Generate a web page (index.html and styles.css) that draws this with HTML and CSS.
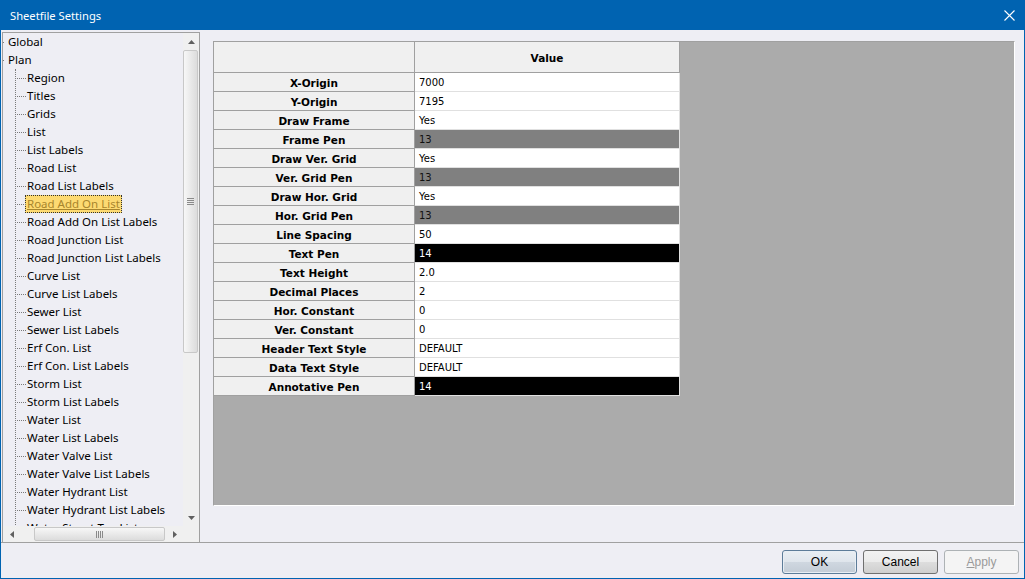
FILE: index.html
```html
<!DOCTYPE html>
<html>
<head>
<meta charset="utf-8">
<link rel="stylesheet" href="styles.css">
</head>
<body>
<div class="window">
  <div class="titlebar">
    <span class="title">Sheetfile Settings</span>
    <svg class="close" width="11" height="11" viewBox="0 0 11 11"><path d="M0.5 0.5 L10.5 10.5 M10.5 0.5 L0.5 10.5" stroke="#fff" stroke-width="1.1" fill="none"/></svg>
  </div>
  <div class="body">
    <div class="tree">
      <div class="tree-view">
        <div class="tree-items">
          <div class="row top"><span class="lbl">Global</span></div>
          <div class="row top"><span class="lbl">Plan</span></div>
          <div class="children">
            <div class="row child"><span class="lbl">Region</span></div>
            <div class="row child"><span class="lbl">Titles</span></div>
            <div class="row child"><span class="lbl">Grids</span></div>
            <div class="row child"><span class="lbl">List</span></div>
            <div class="row child"><span class="lbl">List Labels</span></div>
            <div class="row child"><span class="lbl">Road List</span></div>
            <div class="row child"><span class="lbl">Road List Labels</span></div>
            <div class="row child"><span class="lbl sel">Road Add On List</span></div>
            <div class="row child"><span class="lbl">Road Add On List Labels</span></div>
            <div class="row child"><span class="lbl">Road Junction List</span></div>
            <div class="row child"><span class="lbl">Road Junction List Labels</span></div>
            <div class="row child"><span class="lbl">Curve List</span></div>
            <div class="row child"><span class="lbl">Curve List Labels</span></div>
            <div class="row child"><span class="lbl">Sewer List</span></div>
            <div class="row child"><span class="lbl">Sewer List Labels</span></div>
            <div class="row child"><span class="lbl">Erf Con. List</span></div>
            <div class="row child"><span class="lbl">Erf Con. List Labels</span></div>
            <div class="row child"><span class="lbl">Storm List</span></div>
            <div class="row child"><span class="lbl">Storm List Labels</span></div>
            <div class="row child"><span class="lbl">Water List</span></div>
            <div class="row child"><span class="lbl">Water List Labels</span></div>
            <div class="row child"><span class="lbl">Water Valve List</span></div>
            <div class="row child"><span class="lbl">Water Valve List Labels</span></div>
            <div class="row child"><span class="lbl">Water Hydrant List</span></div>
            <div class="row child"><span class="lbl">Water Hydrant List Labels</span></div>
            <div class="row child"><span class="lbl">Water Street Tap List</span></div>
            <div class="row child"><span class="lbl">Water Street Tap List Labels</span></div>
          </div>
        </div>
        <div class="vscroll">
          <div class="sb-btn"><svg width="7" height="4" viewBox="0 0 7 4"><path d="M3.5 0 L7 4 L0 4 Z" fill="#606060"/></svg></div>
          <div class="thumb-v">
            <svg width="7" height="7" viewBox="0 0 7 7"><path d="M0 0.5H7M0 2.5H7M0 4.5H7M0 6.5H7" stroke="#8a8a8a" stroke-width="1"/></svg>
          </div>
          <div class="track"></div>
          <div class="sb-btn"><svg width="7" height="4" viewBox="0 0 7 4"><path d="M0 0 L7 0 L3.5 4 Z" fill="#606060"/></svg></div>
        </div>
      </div>
      <div class="hscroll-row">
        <div class="hscroll">
          <div class="sb-btn-h"><svg width="4" height="7" viewBox="0 0 4 7"><path d="M4 0 L4 7 L0 3.5 Z" fill="#606060"/></svg></div>
          <div class="thumb-h">
            <svg width="7" height="7" viewBox="0 0 7 7"><path d="M0.5 0V7M2.5 0V7M4.5 0V7M6.5 0V7" stroke="#8a8a8a" stroke-width="1"/></svg>
          </div>
          <div class="track"></div>
          <div class="sb-btn-h"><svg width="4" height="7" viewBox="0 0 4 7"><path d="M0 0 L4 3.5 L0 7 Z" fill="#606060"/></svg></div>
        </div>
        <div class="corner"></div>
      </div>
    </div>
    <div class="main">
      <div class="gridframe">
        <div class="grid">
          <div class="hc"></div><div class="hc">Value</div>
          <div class="rh">X-Origin</div><div class="v">7000</div>
          <div class="rh">Y-Origin</div><div class="v">7195</div>
          <div class="rh">Draw Frame</div><div class="v">Yes</div>
          <div class="rh">Frame Pen</div><div class="v gray">13</div>
          <div class="rh">Draw Ver. Grid</div><div class="v">Yes</div>
          <div class="rh">Ver. Grid Pen</div><div class="v gray">13</div>
          <div class="rh">Draw Hor. Grid</div><div class="v">Yes</div>
          <div class="rh">Hor. Grid Pen</div><div class="v gray">13</div>
          <div class="rh">Line Spacing</div><div class="v">50</div>
          <div class="rh">Text Pen</div><div class="v black">14</div>
          <div class="rh">Text Height</div><div class="v">2.0</div>
          <div class="rh">Decimal Places</div><div class="v">2</div>
          <div class="rh">Hor. Constant</div><div class="v">0</div>
          <div class="rh">Ver. Constant</div><div class="v">0</div>
          <div class="rh">Header Text Style</div><div class="v">DEFAULT</div>
          <div class="rh">Data Text Style</div><div class="v">DEFAULT</div>
          <div class="rh">Annotative Pen</div><div class="v black">14</div>
        </div>
      </div>
    </div>
  </div>
  <div class="footer">
    <button class="btn default">OK</button>
    <button class="btn">Cancel</button>
    <button class="btn disabled"><u>A</u>pply</button>
  </div>
</div>
</body>
</html>
```

FILE: styles.css
```css
* { box-sizing: border-box; }
html, body { margin: 0; padding: 0; }
body {
  width: 1025px;
  height: 579px;
  overflow: hidden;
  font-family: "Liberation Sans", Arial, sans-serif;
  background: #eeeef4;
}
.window {
  width: 1025px;
  height: 579px;
  display: flex;
  flex-direction: column;
  background: #eeeef4;
  border: 1px solid #0063b1;
  border-top: 0;
}
.titlebar {
  height: 30px;
  flex: none;
  margin: 0 -1px;
  background: #0063b1;
  color: #fff;
  display: flex;
  align-items: center;
  justify-content: space-between;
  padding: 0 10px 0 10px;
}
.title {
  font-family: "Noto Sans", "Open Sans", sans-serif;
  font-size: 11.2px;
  padding-top: 1px;
}
.close { display: block; margin-right: 0; }

.body {
  display: flex;
  height: 512px;
  flex: none;
}
.tree {
  width: 198px;
  flex: none;
  margin: 2px 0 0 1px;
  border: 1px solid #a0a0a0;
  border-bottom: 0;
  display: flex;
  flex-direction: column;
  background: #eeeef4;
}
.tree-view {
  display: flex;
  height: 493px;
}
.tree-items {
  width: 180px;
  overflow: hidden;
  font-family: "Noto Sans", "Open Sans", sans-serif;
  font-size: 11.5px;
  color: #000;
}
.row {
  height: 18px;
  display: flex;
  align-items: center;
  white-space: nowrap;
  position: relative;
}
.lbl {
  display: inline-block;
  height: 18px;
  line-height: 16px;
  padding: 0 1px;
  border: 1px dotted transparent;
}
.row.top { padding-left: 3px; }
.row.top::before {
  content: "";
  position: absolute;
  left: 0;
  top: 9px;
  width: 1px;
  height: 1px;
  background: #7a7a7a;
}
.children {
  margin-left: 12px;
  border-left: 1px dotted #7a7a7a;
}
.row.child { padding-left: 9px; }
.row.child::before {
  content: "";
  position: absolute;
  left: 1px;
  top: 9px;
  width: 9px;
  border-top: 1px dotted #7a7a7a;
}
.lbl.sel {
  background: #fdda72;
  border-color: #303030;
  color: #a8852c;
  text-decoration: underline;
}

.vscroll {
  width: 16px;
  flex: none;
  background: #f0f0f0;
  display: flex;
  flex-direction: column;
}
.sb-btn {
  height: 17px;
  flex: none;
  display: flex;
  align-items: center;
  justify-content: center;
}
.thumb-v {
  height: 303px;
  flex: none;
  margin-right: 1px;
  border: 1px solid #c8c8c8;
  border-radius: 2px;
  background: linear-gradient(to right, #f7f7f7, #dcdcdc);
  display: flex;
  align-items: center;
  justify-content: center;
}
.thumb-v svg, .thumb-h svg { display: block; }
.track { flex: 1; }

.hscroll-row {
  display: flex;
  height: 16px;
  flex: none;
}
.hscroll {
  width: 180px;
  flex: none;
  background: #f0f0f0;
  display: flex;
}
.sb-btn-h {
  width: 17px;
  flex: none;
  display: flex;
  align-items: center;
  justify-content: center;
}
.thumb-h {
  margin-left: 14px;
  width: 131px;
  flex: none;
  margin-top: 1px;
  margin-bottom: 1px;
  border: 1px solid #c8c8c8;
  border-radius: 2px;
  background: linear-gradient(to bottom, #f7f7f7, #dcdcdc);
  display: flex;
  align-items: center;
  justify-content: center;
}
.corner { flex: 1; background: #f0f0f0; }

.main {
  flex: 1;
  padding: 11px 9px 36px 13px;
}
.gridframe {
  height: 100%;
  border: 1px solid;
  border-color: #a0a0a0 #ffffff #ffffff #a0a0a0;
  background: #ababab;
}
.grid {
  display: grid;
  grid-template-columns: 201px 265px;
  grid-template-rows: 31px;
  grid-auto-rows: 19px;
  font-family: "DejaVu Sans", Verdana, sans-serif;
  font-size: 10px;
  color: #000;
}
.hc {
  background: #f0f0f0;
  border-right: 1px solid #a0a0a0;
  border-bottom: 1px solid #a0a0a0;
  font-weight: bold;
  font-size: 10.5px;
  text-align: center;
  line-height: 18px;
  padding-top: 7px;
}
.rh {
  background: #f0f0f0;
  border-right: 1px solid #a0a0a0;
  border-bottom: 1px solid #a0a0a0;
  font-weight: bold;
  font-size: 10.5px;
  text-align: center;
  line-height: 18px;
  padding-top: 1px;
}
.v {
  background: #ffffff;
  border-right: 1px solid #e0e0e0;
  border-bottom: 1px solid #e0e0e0;
  padding-left: 4px;
  padding-top: 1px;
  line-height: 17px;
}
.v.gray { background: #808080; color: #111; }
.v.black { background: #000; color: #fff; }

.footer {
  flex: 1;
  border-top: 1px solid #a0a0a0;
  display: flex;
  justify-content: flex-end;
  align-items: flex-start;
  gap: 6px;
  padding: 7px 5px 0 0;
}
.btn {
  width: 75px;
  height: 24px;
  margin: 0;
  border: 1px solid #707070;
  border-radius: 3px;
  background: linear-gradient(to bottom, #f2f2f2 0%, #ebebeb 50%, #dddddd 51%, #cfcfcf 100%);
  font-family: "Liberation Sans", Arial, sans-serif;
  font-size: 12px;
  color: #000;
  padding: 0;
}
.btn.default {
  border-color: #5d7c99;
  background: linear-gradient(to bottom, #e9eef3 0%, #dfe5ec 50%, #cfd7e0 51%, #c3ccd6 100%);
  box-shadow: inset 0 0 0 1px #e8eef4;
}
.btn.disabled {
  border-color: #adb2b5;
  background: #f4f4f4;
  color: #9a9a9a;
}
```
